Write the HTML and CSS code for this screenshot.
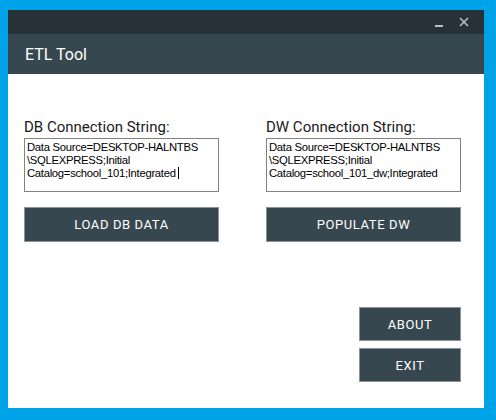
FILE: index.html
```html
<!DOCTYPE html>
<html lang="en">
<head>
  <meta charset="UTF-8">
  <title>ETL Tool</title>
  <link rel="stylesheet" href="styles.css">
</head>
<body>
  <div class="window">
    <div class="titlebar">
      <span class="ctrl ctrl-min"></span>
      <svg class="ctrl ctrl-close" width="10" height="10" viewBox="0 0 10 10">
        <path d="M1 1 L9 9 M9 1 L1 9" stroke="#b9c0c4" stroke-width="1.6"/>
      </svg>
    </div>
    <header class="appbar">
      <h1>ETL Tool</h1>
    </header>
    <main class="content">
      <div class="columns">
        <section class="col">
          <label class="label">DB Connection String:</label>
          <div class="textbox">Data Source=DESKTOP-HALNTBS<br>\SQLEXPRESS;Initial<br>Catalog=school_101;Integrated <span class="caret"></span></div>
          <button class="btn btn-wide">LOAD DB DATA</button>
        </section>
        <section class="col">
          <label class="label">DW Connection String:</label>
          <div class="textbox">Data Source=DESKTOP-HALNTBS<br>\SQLEXPRESS;Initial<br>Catalog=school_101_dw;Integrated</div>
          <button class="btn btn-wide">POPULATE DW</button>
        </section>
      </div>
      <div class="actions">
        <button class="btn btn-small">ABOUT</button>
        <button class="btn btn-small">EXIT</button>
      </div>
    </main>
  </div>
</body>
</html>
```

FILE: styles.css
```css
body {
  margin: 0;
  padding: 10px 12px 12px 8px;
  background-color: #00a2e8;
  font-family: Roboto, sans-serif;
}
.window {
  width: 476px;
  height: 398px;
  display: flex;
  flex-direction: column;
  background-color: #fff;
}
.titlebar {
  height: 24px;
  background-color: #263238;
  display: flex;
  align-items: center;
  justify-content: flex-end;
  padding-right: 15px;
  gap: 16px;
}
.ctrl-min {
  width: 8px;
  height: 2px;
  margin-top: 8px;
  background-color: #b9c0c4;
}
.ctrl-close {
  display: block;
  margin-top: -1px;
}
.appbar {
  height: 40px;
  background-color: #37474f;
  display: flex;
  align-items: center;
  padding-left: 17px;
}
.appbar h1 {
  margin: 0;
  color: #fff;
  font-size: 16px;
  font-weight: 400;
}
.content {
  flex: 1;
  padding: 44px 23px 0 16px;
}
.columns {
  display: flex;
  gap: 47px;
}
.col {
  width: 195px;
  display: flex;
  flex-direction: column;
}
.label {
  font-size: 15px;
  color: #1a1a1a;
  line-height: 19px;
  margin-bottom: 1px;
}
.textbox {
  height: 48px;
  border: 1px solid #828282;
  padding: 2px 2px;
  font-family: "Liberation Sans", Arial, sans-serif;
  font-size: 11.3px;
  line-height: 13px;
  letter-spacing: -0.3px;
  color: #000;
}
.caret {
  display: inline-block;
  width: 1px;
  height: 12px;
  background-color: #000;
  vertical-align: -2px;
}
.btn {
  background-color: #37474f;
  color: #fff;
  border: 1px solid #8a9399;
  font-family: Roboto, sans-serif;
  font-size: 13px;
  font-weight: 400;
  letter-spacing: 0.6px;
  cursor: pointer;
}
.btn-wide {
  margin-top: 15px;
  height: 35px;
}
.actions {
  margin-top: 65px;
  display: flex;
  flex-direction: column;
  align-items: flex-end;
  gap: 7px;
}
.btn-small {
  width: 102px;
  height: 34px;
}
```
